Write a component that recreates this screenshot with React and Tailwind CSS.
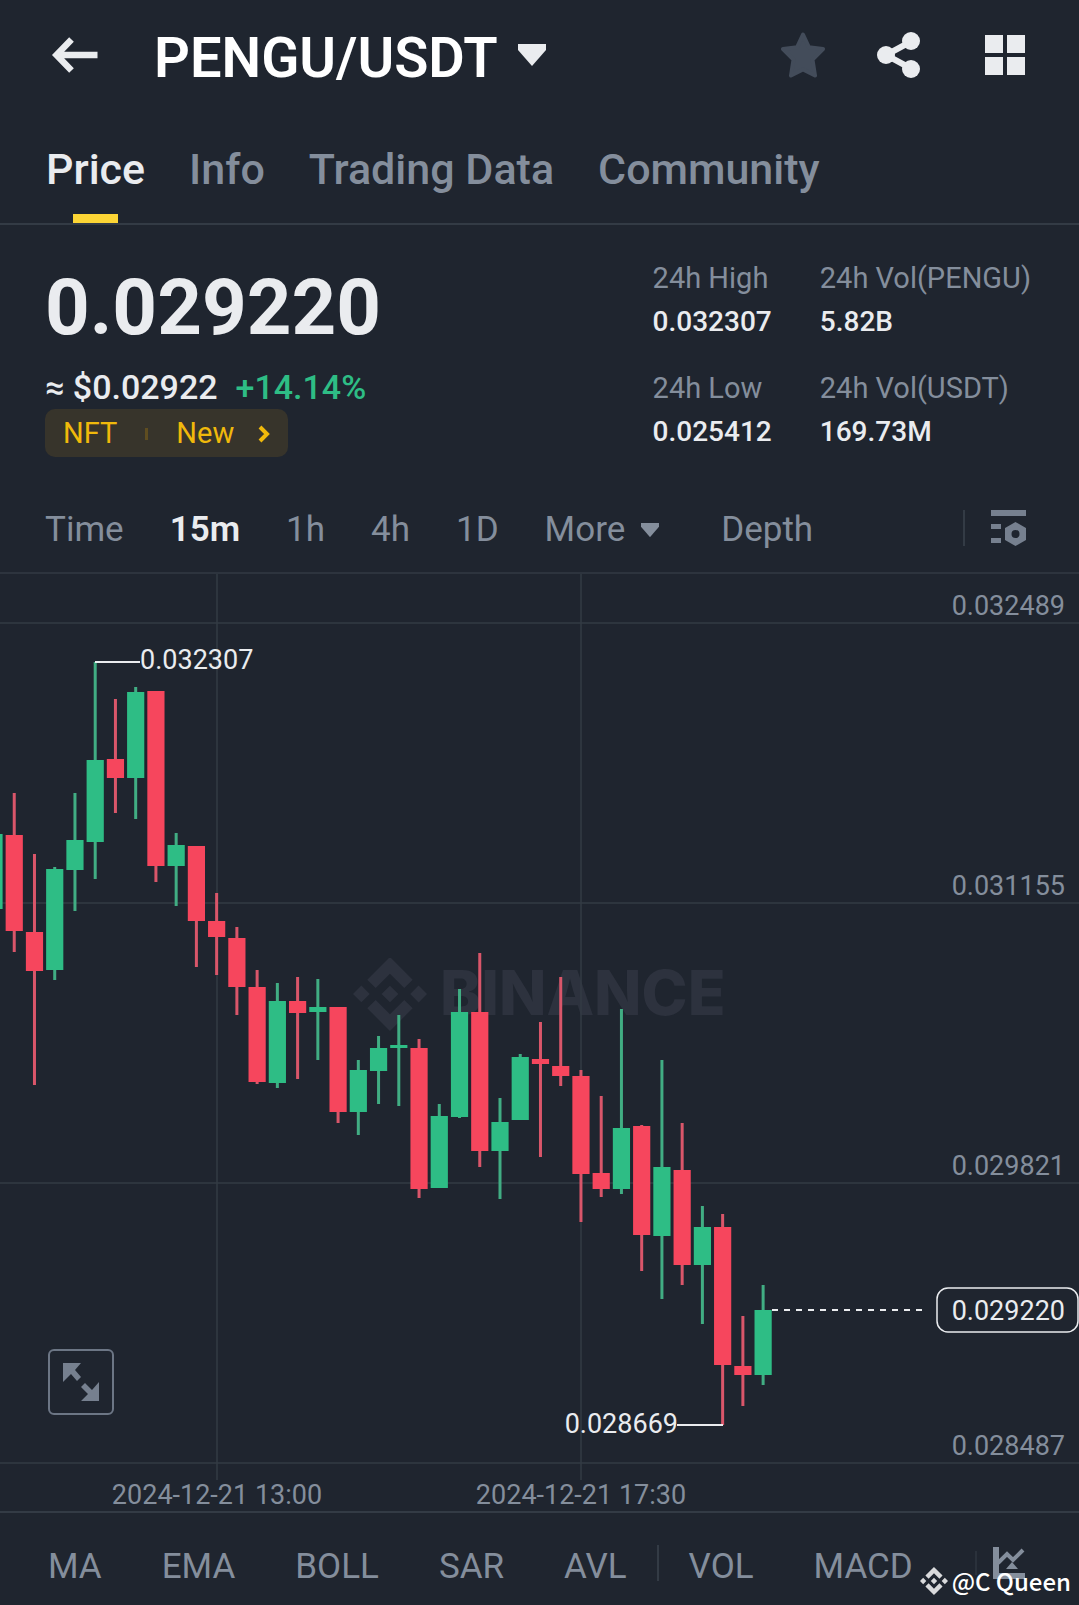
import React, { useState } from "react";
import clsx from "clsx";
import { SiBinance } from "react-icons/si";

const TABS = ["Price", "Info", "Trading Data", "Community"];

const STATS = [
  [
    { label: "24h High", value: "0.032307" },
    { label: "24h Low", value: "0.025412" },
  ],
  [
    { label: "24h Vol(PENGU)", value: "5.82B" },
    { label: "24h Vol(USDT)", value: "169.73M" },
  ],
];

const INTERVALS = ["Time", "15m", "1h", "4h", "1D"];

const MAIN_INDICATORS = ["MA", "EMA", "BOLL", "SAR", "AVL"];
const SUB_INDICATORS = ["VOL", "MACD"];

// [up, high, body top, body bottom, low]
const CANDLES = [
  [1, 260, 260, 335, 335],
  [0, 219, 261, 357, 378],
  [0, 280, 358, 397, 511],
  [1, 293, 295, 396, 406],
  [1, 219, 266, 296, 337],
  [1, 88, 186, 268, 305],
  [0, 125, 185, 204, 239],
  [1, 113, 118, 204, 245],
  [0, 117, 117, 292, 308],
  [1, 259, 271, 292, 332],
  [0, 272, 272, 347, 393],
  [0, 319, 347, 363, 401],
  [0, 353, 364, 413, 441],
  [0, 396, 413, 508, 510],
  [1, 409, 427, 509, 514],
  [0, 403, 427, 439, 505],
  [1, 405, 433, 438, 486],
  [0, 433, 433, 538, 549],
  [1, 486, 496, 538, 561],
  [1, 462, 474, 497, 530],
  [1, 441, 471, 474, 532],
  [0, 465, 474, 615, 624],
  [1, 530, 542, 614, 614],
  [1, 415, 438, 543, 544],
  [0, 379, 438, 577, 593],
  [1, 524, 548, 577, 625],
  [1, 480, 483, 546, 546],
  [0, 448, 485, 490, 583],
  [0, 403, 492, 502, 512],
  [0, 496, 502, 600, 648],
  [0, 522, 599, 615, 623],
  [1, 435, 554, 615, 620],
  [0, 551, 552, 661, 697],
  [1, 486, 593, 662, 725],
  [0, 549, 596, 691, 711],
  [1, 632, 653, 691, 750],
  [0, 640, 653, 791, 851],
  [0, 742, 792, 801, 832],
  [1, 711, 736, 801, 811],
];

const PRICE_LINES = [
  { y: 49, label: "0.032489" },
  { y: 329, label: "0.031155" },
  { y: 609, label: "0.029821" },
  { y: 889, label: "0.028487" },
];

const TIME_LINES = [
  { x: 217, label: "2024-12-21 13:00" },
  { x: 581, label: "2024-12-21 17:30" },
];

const STEP = 20.24;

function CaretIcon({ className }) {
  return (
    <svg viewBox="0 0 28 22" className={className} fill="currentColor">
      <path d="M0 0h28v6L14 22 0 6z" />
    </svg>
  );
}

function Header() {
  return (
    <header className="flex items-center h-28 pb-0.5 pl-12 pr-[54px] text-[#eaecef]">
      <button type="button" aria-label="Back" className="w-[54px]">
        <svg viewBox="0 0 54 40" className="w-[54px] h-10" fill="none">
          <path
            d="M49.500 20H9M23.500 4.500L8.500 20l15 15.500"
            stroke="currentColor"
            strokeWidth="6.500"
          />
        </svg>
      </button>
      <button type="button" className="flex items-center gap-5 ml-[52px]">
        <h1 className="pt-1.5 text-[56px] leading-[64px] font-semibold text-white">
          PENGU/USDT
        </h1>
        <CaretIcon className="w-7" />
      </button>
      <div className="flex items-center ml-auto">
        <button type="button" aria-label="Favorite" className="text-[#434c5a]">
          <svg viewBox="0 0 44 46" className="w-11" fill="currentColor">
            <path
              d="M22 2.500l5.800 12.700L42 17 31.500 27.500 34 43.500 22 37.500 10 43.500 12.500 27.500 2 17l14.200-1.800z"
              stroke="currentColor"
              strokeWidth="4"
              strokeLinejoin="round"
            />
          </svg>
        </button>
        <button type="button" aria-label="Share" className="ml-[52px]">
          <svg viewBox="0 0 44 46" className="w-11" fill="currentColor">
            <path
              d="M35 9L9 23l26 14"
              fill="none"
              stroke="currentColor"
              strokeWidth="6"
            />
            <circle cx="9" cy="23" r="9" />
            <circle cx="34" cy="9" r="9" />
            <circle cx="34" cy="37" r="9" />
          </svg>
        </button>
        <button type="button" aria-label="Menu" className="ml-16">
          <svg viewBox="0 0 40 40" className="w-10" fill="currentColor">
            <path d="M0 0h18v18H0zM22 0h18v18H22zM0 22h18v18H0zM22 22h18v18H22z" />
          </svg>
        </button>
      </div>
    </header>
  );
}

function Tabs() {
  const [current, setCurrent] = useState("Price");

  return (
    <nav className="flex gap-11 pl-[46px] border-b-2 border-[#333b45]">
      {TABS.map((tab) => (
        <button
          key={tab}
          type="button"
          onClick={() => setCurrent(tab)}
          className={clsx(
            "flex flex-col items-center pt-8 text-[43px] leading-[50px] font-medium",
            tab === current ? "text-[#eaecef]" : "text-[#848e9c]"
          )}
        >
          {tab}
          <span
            className={clsx(
              "w-[45px] h-[9px] mt-5",
              tab === current && "bg-[#fcd535]"
            )}
          />
        </button>
      ))}
    </nav>
  );
}

function Summary() {
  return (
    <section className="flex justify-between pt-8 pl-[45px] pr-12">
      <div className="pt-1.5">
        <div className="text-[78px] leading-[90px] font-bold text-[#eaecef]">
          0.029220
        </div>
        <div className="flex gap-[18px] mt-3.5 pb-0.5 text-[34px] leading-10 font-medium text-[#eaecef]">
          <span>≈ $0.02922</span>
          <span className="text-[#2ebd85]">+14.14%</span>
        </div>
        <button
          type="button"
          className="flex items-center h-12 px-[18px] pt-0.5 rounded-[10px] bg-[#37342b] text-[29px] text-[#f0b90b]"
        >
          NFT
          <span className="w-[3px] h-3 mx-7 bg-[#5f4d20]" />
          New
          <svg viewBox="0 0 12 18" className="w-3 ml-6" fill="none">
            <path d="M2 2l7 7-7 7" stroke="currentColor" strokeWidth="4" />
          </svg>
        </button>
      </div>
      <div className="flex gap-12">
        {STATS.map((column, index) => (
          <dl key={index} className="flex flex-col gap-6">
            {column.map(({ label, value }) => (
              <div key={label} className="leading-[43px]">
                <dt className="text-[29px] text-[#848e9c]">{label}</dt>
                <dd className="text-[28px] font-medium text-[#eaecef]">
                  {value}
                </dd>
              </div>
            ))}
          </dl>
        ))}
      </div>
    </section>
  );
}

function Intervals() {
  const [current, setCurrent] = useState("15m");

  return (
    <div className="flex items-center h-[88px] mt-[29px] pl-[45px] pr-[53px] text-[35px] text-[#848e9c] border-b-2 border-[#2d343e]">
      <div className="flex items-center gap-[46px] pt-0.5">
        {INTERVALS.map((item) => (
          <button
            key={item}
            type="button"
            onClick={() => setCurrent(item)}
            className={clsx(item === current && "font-semibold text-[#eaecef]")}
          >
            {item}
          </button>
        ))}
        <button type="button" className="flex items-center gap-4">
          More
          <CaretIcon className="w-[18px]" />
        </button>
        <button type="button" className="ml-4">
          Depth
        </button>
      </div>
      <div className="flex items-center gap-[26px] ml-auto pb-0.5">
        <span className="w-0.5 h-9 bg-[#333b45]" />
        <button type="button" aria-label="Chart settings">
          <svg viewBox="0 0 35 36" className="w-[35px]" fill="#76808f">
            <path d="M0 0h35v6H0zM0 14h10v5H0zM0 28h10v5H0z" />
            <path
              fillRule="evenodd"
              d="M24.500 12L35 18v12l-10.500 6L14 30V18zM24.500 20a4 4 0 100 8 4 4 0 000-8z"
            />
          </svg>
        </button>
      </div>
    </div>
  );
}

function Chart() {
  return (
    <section className="relative">
      <svg viewBox="0 0 1079 937" className="block w-full" fontSize="27">
        <g fill="#2d323e">
          <SiBinance x="353" y="383" size="74" className="text-[#2d323e]" />
          <text
            x="440"
            y="441"
            fontSize="62"
            className="font-['Inter',sans-serif] font-extrabold"
          >
            BINANCE
          </text>
        </g>

        <g stroke="#333b45" strokeWidth="1.500">
          {PRICE_LINES.map(({ y }) => (
            <line key={y} x1="0" x2="1079" y1={y} y2={y} />
          ))}
          {TIME_LINES.map(({ x }) => (
            <line key={x} x1={x} x2={x} y1="0" y2="906" />
          ))}
        </g>

        {CANDLES.map(([up, high, top, bottom, low], index) => {
          const x = -6 + index * STEP;
          return (
            <g key={index} fill={up ? "#2ebd85" : "#f6465d"}>
              <rect
                x={x - 1.5}
                y={high}
                width="3"
                height={low - high}
                fill={up ? "#41ad83" : "#d9566a"}
              />
              <rect x={x - 8.6} y={top} width="17.2" height={bottom - top} />
            </g>
          );
        })}

        <g fill="#848e9c">
          {PRICE_LINES.map(({ y, label }) => (
            <text key={label} x="1065" y={y - 8} textAnchor="end">
              {label}
            </text>
          ))}
          {TIME_LINES.map(({ x, label }) => (
            <text key={label} x={x} y="930" textAnchor="middle">
              {label}
            </text>
          ))}
        </g>

        <g fill="#eaecef" stroke="none">
          <path d="M95 88h45M677 851h46" stroke="#eaecef" strokeWidth="2" />
          <text x="140" y="95">
            0.032307
          </text>
          <text x="678" y="859" textAnchor="end">
            0.028669
          </text>
          <path
            d="M772 736h150"
            stroke="#eaecef"
            strokeWidth="2"
            strokeDasharray="6 6"
          />
          <rect
            x="937"
            y="714"
            width="141"
            height="44"
            rx="11"
            fill="#1f252f"
            stroke="#eaecef"
            strokeWidth="1.500"
          />
          <text x="1065" y="746" textAnchor="end">
            0.029220
          </text>
        </g>
      </svg>
      <button
        type="button"
        aria-label="Full screen"
        className="absolute left-12 bottom-24 flex items-center justify-center w-[66px] h-[66px] border-2 border-[#6c7685] rounded-md"
      >
        <svg viewBox="0 0 36 38" className="w-9" fill="#76808f">
          <path d="M0 0h18l-6 7 6 7-4 4-6-7-8 8z" />
          <path d="M36 38H18l7-7-7-7 4-4 7 7 7-8z" />
        </svg>
      </button>
    </section>
  );
}

function Indicators() {
  return (
    <footer className="relative flex items-center h-[94px] pl-12 pr-[54px] pt-4 border-t-2 border-[#333b45] text-[35px] text-[#848e9c]">
      <div className="flex items-center gap-[60px]">
        {MAIN_INDICATORS.map((item) => (
          <button key={item} type="button">
            {item}
          </button>
        ))}
      </div>
      <span className="w-0.5 h-9 mx-[30px] mb-2 bg-[#333b45]" />
      <div className="flex items-center gap-[60px]">
        {SUB_INDICATORS.map((item) => (
          <button key={item} type="button">
            {item}
          </button>
        ))}
      </div>
      <span className="w-0.5 h-6 ml-auto mr-4 mb-2 bg-[#2a313b]" />
      <button type="button" aria-label="Indicator settings" className="mb-2">
        <svg viewBox="0 0 32 32" className="w-8" fill="#848e9c">
          <path d="M0 0h6v26h26v6H0z" />
          <path
            d="M5 16l9-9 6 6L30 3"
            fill="none"
            stroke="#848e9c"
            strokeWidth="4"
          />
          <path d="M19 15l6 7H13z" />
        </svg>
      </button>
      <div className="absolute right-2 bottom-1 flex items-center gap-1 text-[24px] leading-10 font-medium text-white font-['Noto_Sans_CJK_SC',sans-serif]">
        <SiBinance className="w-7 h-7 text-[#d9dadc]" />
        @C Queen
      </div>
    </footer>
  );
}

function App() {
  return (
    <main className="min-h-screen overflow-hidden bg-[#1f252f] font-['Roboto',sans-serif]">
      <Header />
      <Tabs />
      <Summary />
      <Intervals />
      <Chart />
      <Indicators />
    </main>
  );
}

export default App;
